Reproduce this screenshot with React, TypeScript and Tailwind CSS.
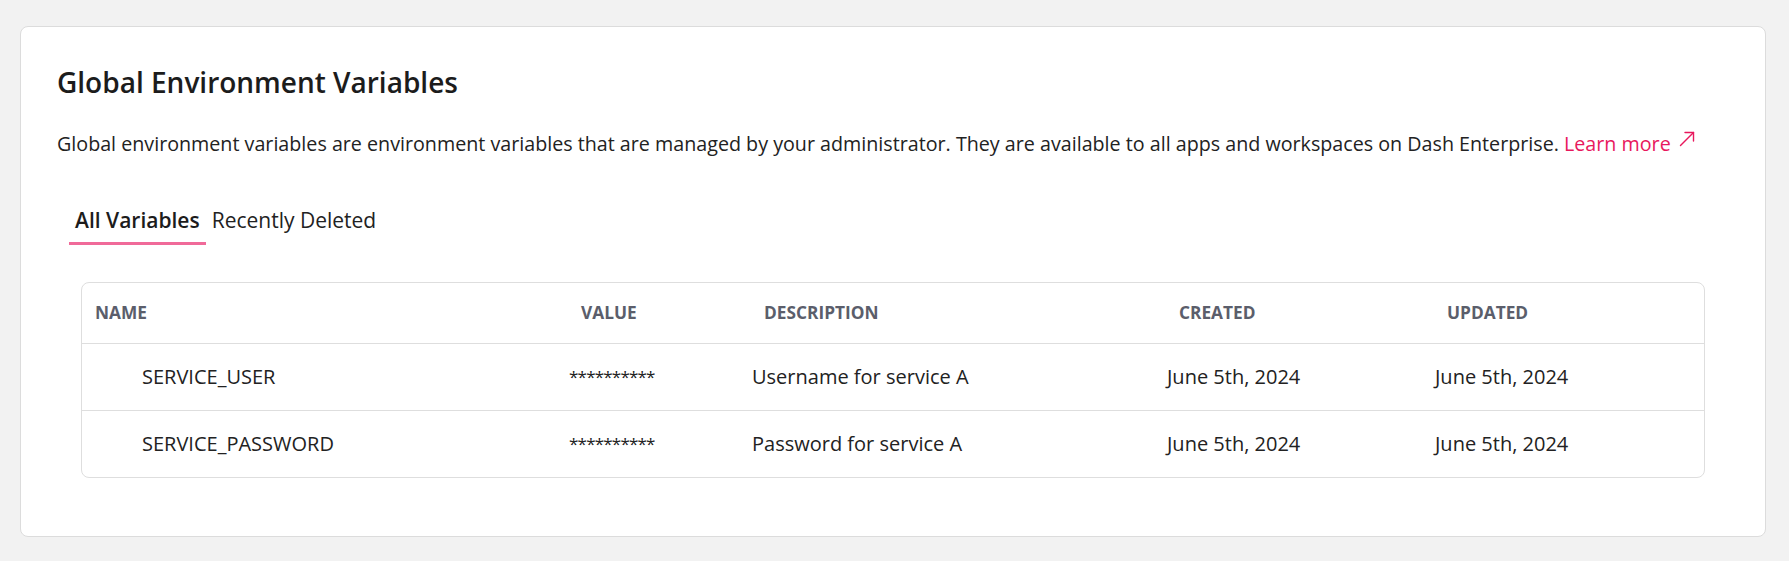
import React from "react";

const rows = [
  { name: "SERVICE_USER", desc: "Username for service A", created: "June 5th, 2024", updated: "June 5th, 2024" },
  { name: "SERVICE_PASSWORD", desc: "Password for service A", created: "June 5th, 2024", updated: "June 5th, 2024" },
];

const cols = "grid grid-cols-[487px_183px_415px_268px_1fr]";

export default function App() {
  return (
    <div className="h-[561px] w-full bg-[#f2f2f2] pt-[26px] pl-[20px] font-['Open_Sans',sans-serif]">
      <div className="w-[1746px] h-[511px] rounded-lg border border-[#dcdcdc] bg-white px-[36px] pt-[38px]">
        <h1 className="text-[28px] leading-[34px] font-semibold text-[#1c1c1c]">Global Environment Variables</h1>
        <p className="mt-[31px] text-[19.7px] leading-[28px] text-[#222222]">
          Global environment variables are environment variables that are managed by your administrator. They are
          available to all apps and workspaces on Dash Enterprise.{" "}
          <a className="text-[#e8185d]" href="#">
            Learn more
            <svg
              className="inline-block ml-[8px] align-[4px]"
              width="16"
              height="16"
              viewBox="0 0 16 16"
              fill="none"
              stroke="#e8185d"
              strokeWidth="1.4"
              strokeLinecap="round"
              strokeLinejoin="round"
            >
              <path d="M1.5 14.5 L14.5 1.5" />
              <path d="M6 1.5 H14.5 V10" />
            </svg>
          </a>
        </p>
        <div className="mt-[48px] ml-[12px] flex text-[21px] leading-[28px]">
          <div className="px-[6px] pb-[8px] border-b-[3px] border-[#f06a99] font-semibold text-[#1c1c1c]">All Variables</div>
          <div className="px-[6px] pb-[8px] border-b-[3px] border-transparent text-[#222222]">Recently Deleted</div>
        </div>
        <div className="mt-[37px] mx-6 rounded-lg border border-[#dedede]">
          <div className={`${cols} h-[61px] items-center border-b border-[#dedede] text-[17.3px] font-bold uppercase text-[#5b5e6b]`}>
            <div className="pl-[13px]">Name</div>
            <div className="pl-[12px]">Value</div>
            <div className="pl-[12px]">Description</div>
            <div className="pl-[12px]">Created</div>
            <div className="pl-[12px]">Updated</div>
          </div>
          {rows.map((r, i) => (
            <div
              key={r.name}
              className={`${cols} items-center text-[20px] leading-[28px] text-[#222222] ${
                i < rows.length - 1 ? "h-[67px] border-b border-[#dedede]" : "h-[66px]"
              }`}
            >
              <div className="pl-[60px]">{r.name}</div>
              <div className="text-[17px] tracking-[-0.8px]">**********</div>
              <div>{r.desc}</div>
              <div>{r.created}</div>
              <div>{r.updated}</div>
            </div>
          ))}
        </div>
      </div>
    </div>
  );
}
